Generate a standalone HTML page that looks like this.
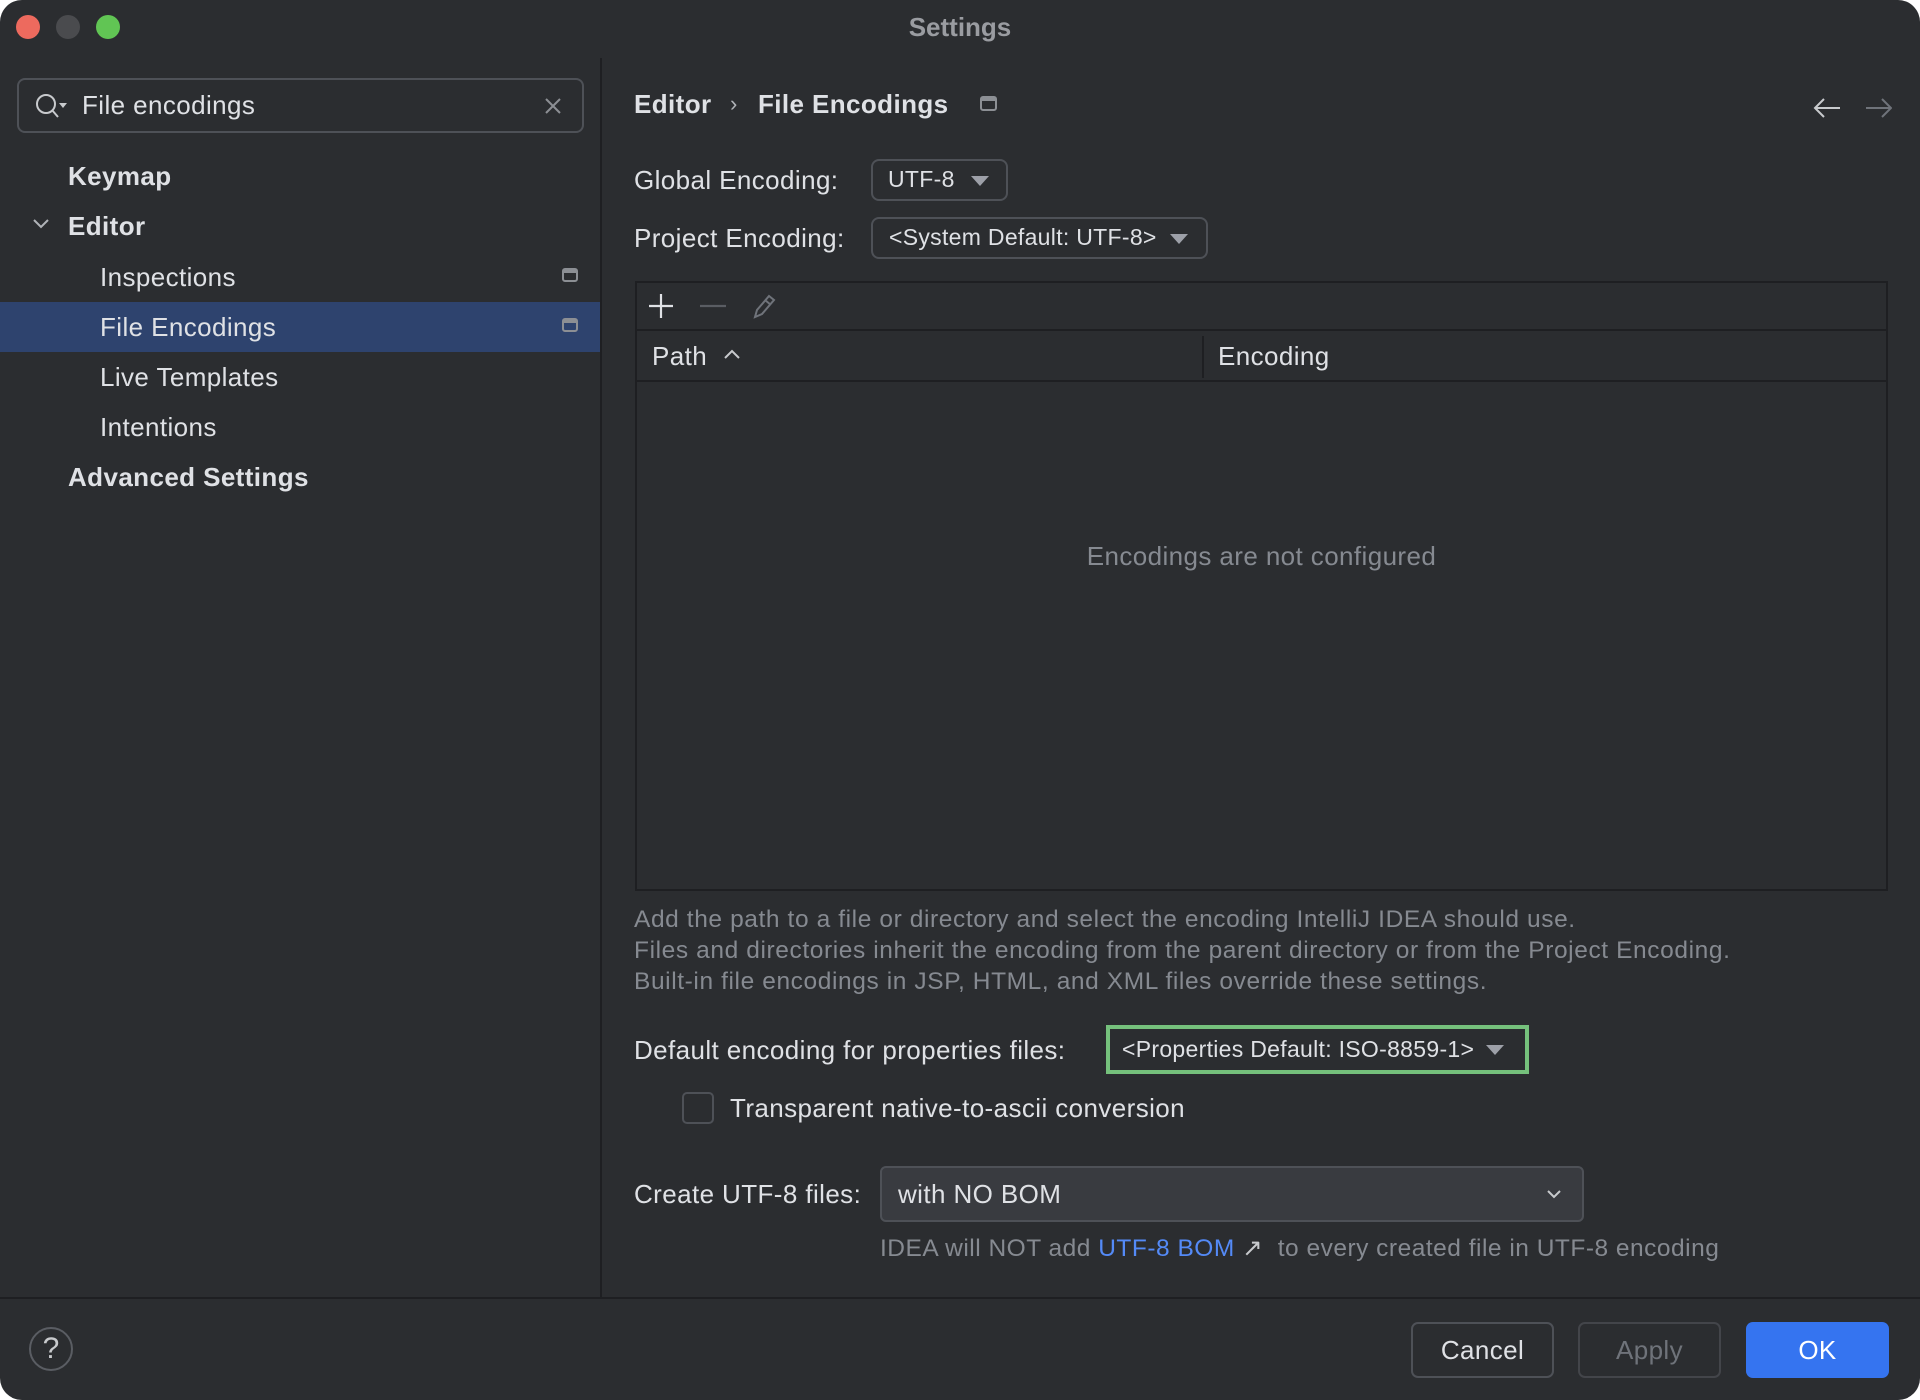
<!DOCTYPE html>
<html><head><meta charset="utf-8"><style>
html,body{margin:0;padding:0;width:1920px;height:1400px;background:#fff;overflow:hidden}
.win{position:absolute;left:0;top:0;width:1920px;height:1400px;background:#2b2d30;border-radius:22px;overflow:hidden;font-family:"Liberation Sans",sans-serif;color:#dfe1e5}
.a{position:absolute;white-space:nowrap}
.t{font-size:26px;line-height:30px;letter-spacing:0.4px}
.b{font-weight:bold}
.box{position:absolute;border:2px solid #4e5157;border-radius:8px;box-sizing:border-box}
.tri{position:absolute;width:0;height:0;border-left:9px solid transparent;border-right:9px solid transparent;border-top:10px solid #9da0a8}
.g{color:#868a91}
.dd{font-size:23px;line-height:26px;letter-spacing:0.3px}
</style></head><body><div class="win">
<div class="a" style="left:16px;top:15px;width:24px;height:24px;border-radius:50%;background:#ed6a5e"></div>
<div class="a" style="left:56px;top:15px;width:24px;height:24px;border-radius:50%;background:#4a4b4e"></div>
<div class="a" style="left:96px;top:15px;width:24px;height:24px;border-radius:50%;background:#61c554"></div>
<div class="a b" style="left:0;width:1920px;text-align:center;top:12px;font-size:26px;color:#9a9ca1">Settings</div>
<div class="a" style="left:600px;top:58px;width:2px;height:1240px;background:#1e1f22"></div>
<div class="box" style="left:17px;top:78px;width:567px;height:55px;border-radius:8px"></div>
<svg class="a" style="left:34px;top:92px" width="36" height="30"><circle cx="12" cy="12" r="9" stroke="#c8cacd" stroke-width="2" fill="none"/><line x1="18" y1="18" x2="24" y2="25" stroke="#c8cacd" stroke-width="2"/><path d="M25 11 L33 11 L29 16Z" fill="#c8cacd"/></svg>
<div class="a t" style="left:82px;top:90px">File encodings</div>
<svg class="a" style="left:544px;top:97px" width="18" height="18"><path d="M2 2L16 16M16 2L2 16" stroke="#8c8f94" stroke-width="2"/></svg>
<div class="a t b" style="left:68px;top:161px">Keymap</div>
<svg class="a" style="left:32px;top:218px" width="18" height="12"><path d="M2 2L9 9L16 2" stroke="#b0b3b8" stroke-width="2" fill="none"/></svg>
<div class="a t b" style="left:68px;top:211px">Editor</div>
<div class="a t" style="left:100px;top:262px">Inspections</div>
<div class="a" style="left:0;top:302px;width:600px;height:50px;background:#2e436e"></div>
<div class="a t" style="left:100px;top:312px">File Encodings</div>
<div class="a t" style="left:100px;top:362px">Live Templates</div>
<div class="a t" style="left:100px;top:412px">Intentions</div>
<div class="a t b" style="left:68px;top:462px">Advanced Settings</div>
<div class="a" style="left:562px;top:268px;width:16px;height:14px;border:2px solid #8c8f94;border-radius:3px;box-sizing:border-box;border-top-width:5px"></div>
<div class="a" style="left:562px;top:318px;width:16px;height:14px;border:2px solid #8c8f94;border-radius:3px;box-sizing:border-box;border-top-width:5px"></div>
<div class="a t b" style="left:634px;top:89px">Editor</div>
<div class="a t" style="left:730px;top:89px;color:#b0b3b8;font-size:22px">›</div>
<div class="a t b" style="left:758px;top:89px">File Encodings</div>
<div class="a" style="left:980px;top:96px;width:17px;height:15px;border:2px solid #8c8f94;border-radius:3px;box-sizing:border-box;border-top-width:5px"></div>
<svg class="a" style="left:1812px;top:96px" width="80" height="24"><path d="M28 12H4M12 3L3 12L12 21" stroke="#c8cacd" stroke-width="2" fill="none"/><path d="M54 12H78M70 3L79 12L70 21" stroke="#6f737a" stroke-width="2" fill="none"/></svg>
<div class="a t" style="left:634px;top:165px">Global Encoding:</div>
<div class="box" style="left:871px;top:159px;width:137px;height:42px"></div>
<div class="a dd" style="left:888px;top:166px">UTF-8</div>
<div class="tri" style="left:971px;top:176px"></div>
<div class="a t" style="left:634px;top:223px">Project Encoding:</div>
<div class="box" style="left:871px;top:217px;width:337px;height:42px"></div>
<div class="a dd" style="left:889px;top:224px">&lt;System Default: UTF-8&gt;</div>
<div class="tri" style="left:1170px;top:234px"></div>
<div class="a" style="left:635px;top:281px;width:1253px;height:610px;border:2px solid #1e1f22;box-sizing:border-box"></div>
<div class="a" style="left:637px;top:329px;width:1249px;height:2px;background:#1e1f22"></div>
<div class="a" style="left:637px;top:380px;width:1249px;height:2px;background:#1e1f22"></div>
<div class="a" style="left:1202px;top:336px;width:2px;height:42px;background:#1e1f22"></div>
<svg class="a" style="left:645px;top:290px" width="150" height="32"><path d="M16 4V28M4 16H28" stroke="#dfe1e5" stroke-width="2.2"/><path d="M55 16H81" stroke="#5a5d63" stroke-width="2.2"/><path d="M110 27L112 20L124 6L129 10L117 24Z M120 10L126 15" stroke="#6f737a" stroke-width="2" fill="none"/></svg>
<div class="a t" style="left:652px;top:341px">Path</div>
<svg class="a" style="left:723px;top:348px" width="18" height="12"><path d="M2 10L9 3L16 10" stroke="#c8cacd" stroke-width="2" fill="none"/></svg>
<div class="a t" style="left:1218px;top:341px">Encoding</div>
<div class="a t g" style="left:637px;width:1249px;text-align:center;top:541px">Encodings are not configured</div>
<div class="a g" style="left:634px;top:904px;font-size:24.5px;line-height:31px;letter-spacing:0.6px">Add the path to a file or directory and select the encoding IntelliJ IDEA should use.<br>Files and directories inherit the encoding from the parent directory or from the Project Encoding.<br>Built-in file encodings in JSP, HTML, and XML files override these settings.</div>
<div class="a t" style="left:634px;top:1035px">Default encoding for properties files:</div>
<div class="a" style="left:1106px;top:1025px;width:423px;height:49px;border:4px solid #75c17c;box-sizing:border-box"></div>
<div class="a dd" style="left:1122px;top:1036px">&lt;Properties Default: ISO-8859-1&gt;</div>
<div class="tri" style="left:1486px;top:1045px"></div>
<div class="a" style="left:682px;top:1092px;width:32px;height:32px;border:2px solid #4e5157;border-radius:5px;box-sizing:border-box"></div>
<div class="a t" style="left:730px;top:1093px">Transparent native-to-ascii conversion</div>
<div class="a t" style="left:634px;top:1179px">Create UTF-8 files:</div>
<div class="a" style="left:880px;top:1166px;width:704px;height:56px;background:#393b40;border:2px solid #4e5157;border-radius:6px;box-sizing:border-box"></div>
<div class="a t" style="left:898px;top:1179px">with NO BOM</div>
<svg class="a" style="left:1546px;top:1188px" width="16" height="12"><path d="M2 3L8 9L14 3" stroke="#c8cacd" stroke-width="2" fill="none"/></svg>
<div class="a g" style="left:880px;top:1234px;font-size:24.5px;line-height:30px;letter-spacing:0.5px">IDEA will NOT add <span style="color:#548af7">UTF-8 BOM</span> <span style="color:#c8cacd">↗</span>&nbsp; to every created file in UTF-8 encoding</div>
<div class="a" style="left:0;top:1297px;width:1920px;height:2px;background:#1e1f22"></div>
<div class="a" style="left:29px;top:1327px;width:44px;height:44px;border:2px solid #5a5d63;border-radius:50%;box-sizing:border-box;text-align:center;font-size:30px;line-height:40px;color:#c8cacd">?</div>
<div class="box" style="left:1411px;top:1322px;width:143px;height:56px;border-radius:7px"></div>
<div class="a t" style="left:1411px;width:143px;text-align:center;top:1335px">Cancel</div>
<div class="box" style="left:1578px;top:1322px;width:143px;height:56px;border-radius:7px;border-color:#43454a"></div>
<div class="a t" style="left:1578px;width:143px;text-align:center;top:1335px;color:#6f737a">Apply</div>
<div class="a" style="left:1746px;top:1322px;width:143px;height:56px;border-radius:7px;background:#3574f0"></div>
<div class="a t" style="left:1746px;width:143px;text-align:center;top:1335px;color:#fff">OK</div>
</div></body></html>
